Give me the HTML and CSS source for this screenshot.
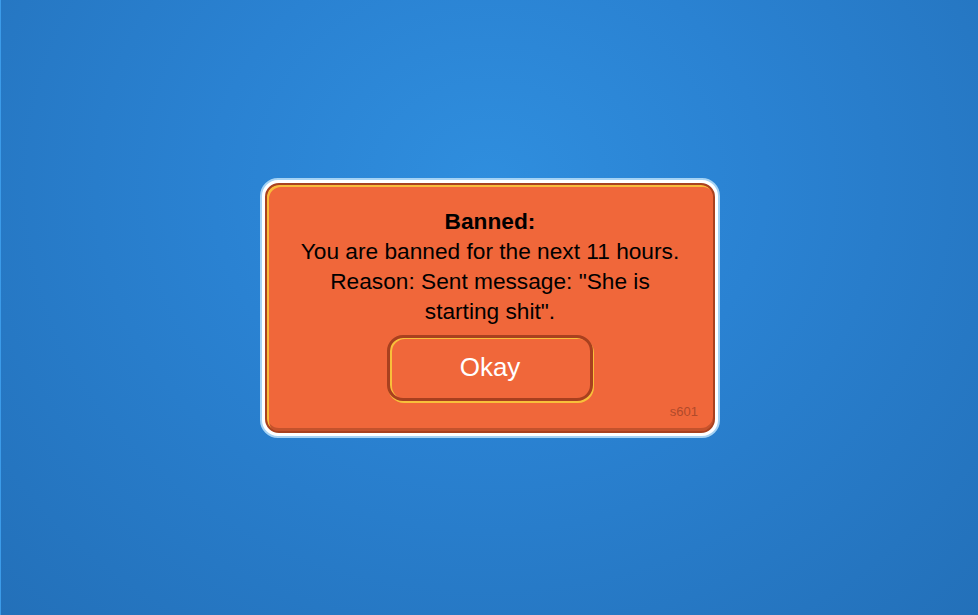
FILE: index.html
```html
<!DOCTYPE html>
<html lang="en">
<head>
    <meta charset="UTF-8">
    <meta name="viewport" content="width=device-width, initial-scale=1.0">
    <title>Banned</title>
    <link rel="stylesheet" href="styles.css">
</head>
<body>

    <div class="dialog">
        <div class="panel">
            <p class="message">
                <strong>Banned:</strong><br>
                You are banned for the next 11 hours.<br>
                Reason: Sent message: "She is<br>
                starting shit".
            </p>
            <button class="okay">Okay</button>
            <span class="code">s601</span>
        </div>
    </div>

</body>
</html>
```

FILE: styles.css
```css
/* Fond bleu + fenêtre d'erreur */
html, body {
    height: 100%;
}
body {
    margin: 0;
    font-family: "Liberation Sans", Arial, sans-serif;
    background: radial-gradient(ellipse at 50% 30%, #2f8ede 0%, #2a82d2 40%, #2370b9 100%);
    border-left: 1px solid #3b9be9;
    box-sizing: border-box;
    display: flex;
    align-items: center;
    justify-content: center;
}
.dialog {
    width: 460px;
    height: 260px;
    box-sizing: border-box;
    background-color: #fff;
    border: 2px solid #a6d3f4;
    border-radius: 18px;
    padding: 3px;
    margin-left: 1px;
}
/* Panneau orange */
.panel {
    position: relative;
    height: 100%;
    box-sizing: border-box;
    background-color: #f0673a;
    border: 2px solid #a9411f;
    border-radius: 14px;
    box-shadow: inset 2px 2px 0 #f7bb3a, inset 0 -3px 0 #c4522c;
    display: flex;
    flex-direction: column;
    align-items: center;
    padding-top: 21px;
}
.message {
    margin: 0;
    font-size: 22.7px;
    line-height: 30px;
    text-align: center;
    color: #000;
}
.okay {
    margin-top: 9px;
    width: 206px;
    height: 66px;
    border: 3px solid #a8401f;
    border-radius: 16px;
    background-color: #f0673a;
    box-shadow: inset 2px 1px 0 #f8c03a, 1px 2px 0 #f8c03a;
    color: #fff;
    font-family: inherit;
    font-size: 26px;
    cursor: pointer;
}
.code {
    position: absolute;
    right: 15px;
    bottom: 12px;
    font-size: 13px;
    color: #b14a2a;
}
```
